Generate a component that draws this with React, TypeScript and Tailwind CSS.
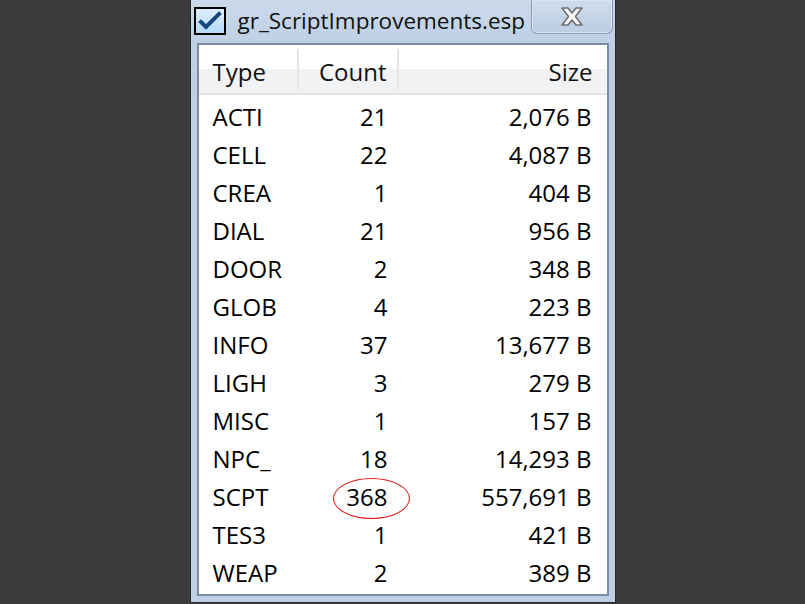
import React from 'react';

// one row per record type in the plugin
const rows: [string, string, string][] = [
  ['ACTI', '21', '2,076 B'],
  ['CELL', '22', '4,087 B'],
  ['CREA', '1', '404 B'],
  ['DIAL', '21', '956 B'],
  ['DOOR', '2', '348 B'],
  ['GLOB', '4', '223 B'],
  ['INFO', '37', '13,677 B'],
  ['LIGH', '3', '279 B'],
  ['MISC', '1', '157 B'],
  ['NPC_', '18', '14,293 B'],
  ['SCPT', '368', '557,691 B'],
  ['TES3', '1', '421 B'],
  ['WEAP', '2', '389 B'],
];

function CheckIcon() {
  return (
    <svg width="32" height="28" viewBox="0 0 32 28">
      <defs>
        <linearGradient id="cb" x1="0" y1="0" x2="0" y2="1">
          <stop offset="0" stopColor="#dcefff" />
          <stop offset="1" stopColor="#b5d9fd" />
        </linearGradient>
      </defs>
      <rect x="1" y="1" width="30" height="26" fill="url(#cb)" stroke="#000" strokeWidth="2" />
      <path d="M7 15 L12 20 L25 7" fill="none" stroke="#16467e" strokeWidth="4" strokeLinecap="square" />
    </svg>
  );
}

function CloseGlyph() {
  return (
    <svg width="24" height="19" viewBox="0 0 24 19">
      <path
        d="M2 1 H8 L12 6 L16 1 H22 L15.5 9.5 L22 18 H16 L12 13 L8 18 H2 L8.5 9.5 Z"
        fill="#f6f6f6"
        stroke="#6e6e6e"
        strokeWidth="1.5"
        strokeLinejoin="round"
      />
    </svg>
  );
}

export default function App() {
  return (
    <div className="w-[805px] h-[604px] bg-[#3c3c3c] flex justify-center font-['Open_Sans','Noto_Sans',sans-serif]">
      <div className="w-[426px] h-[603px] border border-t-0 border-[#262a30] bg-[#bfd0e5] flex flex-col">
        {/* title bar */}
        <div className="h-[43px] flex items-start bg-[linear-gradient(#cbd9ea,#bfd0e5)]">
          <div className="mt-[7px] ml-[3px]">
            <CheckIcon />
          </div>
          <span className="ml-[12px] mt-[6px] text-[22.5px] leading-[30px] text-[#111]">gr_ScriptImprovements.esp</span>
          <div className="ml-auto mr-[2px] w-[82px] h-[34px] rounded-b-[6px] border border-t-0 border-[#8a9ab0] shadow-[inset_0_0_0_1px_#dbe6f3] bg-[linear-gradient(#cfdcec,#bccde2)] flex items-center justify-center">
            <CloseGlyph />
          </div>
        </div>

        {/* list view */}
        <div className="flex-1 mx-[6px] mb-[6px] border-2 border-[#7d8da1] bg-white flex flex-col text-[24px] text-black">
          <div className="h-[50px] flex border-b-2 border-[#e2e4e7] bg-[linear-gradient(#ffffff_50%,#f1f2f4_50%)] text-[#111]">
            <div className="w-[100px] flex items-center pl-[14px] pt-[5px] border-r-2 border-[#e4e6e9] my-[4px]">Type</div>
            <div className="w-[100px] flex items-center justify-end pr-[10px] pt-[5px] border-r-2 border-[#e4e6e9] my-[4px]">Count</div>
            <div className="flex-1 flex items-center justify-end pr-[14px] pt-[5px]">Size</div>
          </div>
          <div className="pt-[3px] flex flex-col">
            {rows.map(([type, count, size]) => (
              <div key={type} className="h-[38px] flex items-center">
                <div className="w-[100px] pl-[14px]">{type}</div>
                <div className="w-[100px] pr-[11px] text-right relative">
                  {count}
                  {type === 'SCPT' && (
                    <div className="absolute left-[34px] top-[-1px] w-[77px] h-[41px] rounded-[50%] border-[1.5px] border-[#e01010]" />
                  )}
                </div>
                <div className="flex-1 pr-[15px] text-right">{size}</div>
              </div>
            ))}
          </div>
        </div>
      </div>
    </div>
  );
}
